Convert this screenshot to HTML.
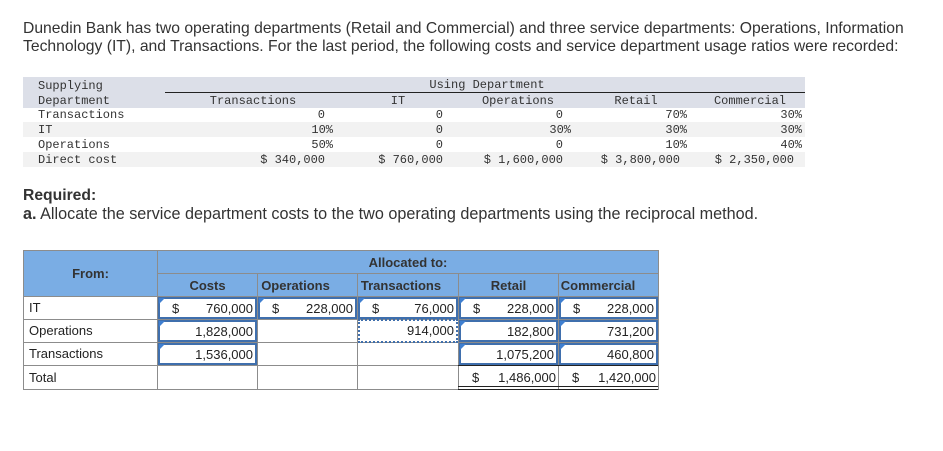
<!DOCTYPE html>
<html><head><meta charset="utf-8"><style>
body{margin:0;width:943px;height:451px;background:#fff;position:relative;overflow:hidden;font-family:"Liberation Sans",sans-serif;color:#333}
.a{position:absolute;white-space:nowrap}
.m{font-family:"Liberation Mono",monospace;font-size:12px;color:#333;line-height:15px}
.r{text-align:right}
.c{text-align:center}
.p{font-size:15.7px;line-height:18px}
.cell{position:absolute;box-sizing:border-box;border:1px solid #8c8c8c;font-size:13px;color:#222}
.hd{background:#7aade4}
.in{position:absolute;box-sizing:border-box;border:2px solid #3f6fad;font-size:13px;color:#222;line-height:19px}
.in:before{content:"";position:absolute;left:-1px;top:-1px;border-left:6px solid #3f7fd0;border-bottom:6px solid transparent}
.t{font-size:13px;color:#222;line-height:19px}
</style></head><body>
<div class="a p" style="left:23px;top:20px">Dunedin Bank has two operating departments (Retail and Commercial) and three service departments: Operations, Information</div>
<div class="a p" style="left:23px;top:38px">Technology (IT), and Transactions. For the last period, the following costs and service department usage ratios were recorded:</div>

<div class="a" style="left:23px;top:77px;width:782px;height:31px;background:#dcdfe8"></div>
<div class="a" style="left:23px;top:122px;width:782px;height:15px;background:#f2f2f2"></div>
<div class="a" style="left:23px;top:152px;width:782px;height:15px;background:#f2f2f2"></div>
<div class="a" style="left:165px;top:92px;width:640px;height:1px;background:#222"></div>

<div class="a m" style="left:38px;top:79px">Supplying</div>
<div class="a m" style="left:38px;top:94px">Department</div>
<div class="a m" style="left:38px;top:108px">Transactions</div>
<div class="a m" style="left:38px;top:123px">IT</div>
<div class="a m" style="left:38px;top:138px">Operations</div>
<div class="a m" style="left:38px;top:153px">Direct cost</div>
<div class="a m c" style="left:387px;width:200px;top:78px">Using Department</div>
<div class="a m c" style="left:153px;width:200px;top:94px">Transactions</div>
<div class="a m c" style="left:298px;width:200px;top:94px">IT</div>
<div class="a m c" style="left:418px;width:200px;top:94px">Operations</div>
<div class="a m c" style="left:536px;width:200px;top:94px">Retail</div>
<div class="a m c" style="left:650px;width:200px;top:94px">Commercial</div>

<div class="a m r" style="right:618px;top:108px">0</div>
<div class="a m r" style="right:610px;top:123px">10%</div>
<div class="a m r" style="right:610px;top:138px">50%</div>
<div class="a m r" style="right:618px;top:153px">$ 340,000</div>
<div class="a m r" style="right:500px;top:108px">0</div>
<div class="a m r" style="right:500px;top:123px">0</div>
<div class="a m r" style="right:500px;top:138px">0</div>
<div class="a m r" style="right:500px;top:153px">$ 760,000</div>
<div class="a m r" style="right:380px;top:108px">0</div>
<div class="a m r" style="right:372px;top:123px">30%</div>
<div class="a m r" style="right:380px;top:138px">0</div>
<div class="a m r" style="right:380px;top:153px">$ 1,600,000</div>
<div class="a m r" style="right:256px;top:108px">70%</div>
<div class="a m r" style="right:256px;top:123px">30%</div>
<div class="a m r" style="right:256px;top:138px">10%</div>
<div class="a m r" style="right:263px;top:153px">$ 3,800,000</div>
<div class="a m r" style="right:141px;top:108px">30%</div>
<div class="a m r" style="right:141px;top:123px">30%</div>
<div class="a m r" style="right:141px;top:138px">40%</div>
<div class="a m r" style="right:149px;top:153px">$ 2,350,000</div>

<div class="a p" style="left:23px;top:187px;font-weight:bold">Required:</div>
<div class="a p" style="left:23px;top:205px;font-size:16.2px"><b>a.</b> Allocate the service department costs to the two operating departments using the reciprocal method.</div>

<div class="cell hd" style="left:23px;top:250px;width:135px;height:47px"></div>
<div class="a t c" style="left:23px;width:135px;top:264px;font-weight:bold;color:#333">From:</div>
<div class="cell hd" style="left:157px;top:250px;width:502px;height:24px"></div>
<div class="a t c" style="left:157px;width:502px;top:253px;font-weight:bold;color:#333">Allocated to:</div>
<div class="cell hd" style="left:157px;top:273px;width:101px;height:24px"></div>
<div class="cell hd" style="left:257px;top:273px;width:101px;height:24px"></div>
<div class="cell hd" style="left:357px;top:273px;width:102px;height:24px"></div>
<div class="cell hd" style="left:458px;top:273px;width:101px;height:24px"></div>
<div class="cell hd" style="left:558px;top:273px;width:101px;height:24px"></div>
<div class="a t c" style="left:157px;width:101px;top:276px;font-weight:bold;color:#333">Costs</div>
<div class="a t c" style="left:257px;width:77px;top:276px;font-weight:bold;color:#333">Operations</div>
<div class="a t c" style="left:357px;width:88px;top:276px;font-weight:bold;color:#333">Transactions</div>
<div class="a t c" style="left:458px;width:101px;top:276px;font-weight:bold;color:#333">Retail</div>
<div class="a t c" style="left:558px;width:80px;top:276px;font-weight:bold;color:#333">Commercial</div>

<div class="cell" style="left:23px;top:296px;width:135px;height:24px"></div>
<div class="cell" style="left:23px;top:319px;width:135px;height:24px"></div>
<div class="cell" style="left:23px;top:342px;width:135px;height:24px"></div>
<div class="cell" style="left:23px;top:365px;width:135px;height:25px"></div>
<div class="cell" style="left:157px;top:296px;width:502px;height:94px"></div>
<div class="a" style="left:257px;top:296px;width:1px;height:94px;background:#8c8c8c"></div>
<div class="a" style="left:357px;top:296px;width:1px;height:94px;background:#8c8c8c"></div>
<div class="a" style="left:458px;top:296px;width:1px;height:94px;background:#8c8c8c"></div>
<div class="a" style="left:558px;top:296px;width:1px;height:94px;background:#8c8c8c"></div>
<div class="a" style="left:157px;top:319px;width:502px;height:1px;background:#8c8c8c"></div>
<div class="a" style="left:157px;top:342px;width:502px;height:1px;background:#8c8c8c"></div>
<div class="a" style="left:157px;top:365px;width:502px;height:1px;background:#8c8c8c"></div>
<div class="a" style="left:458px;top:386px;width:200px;height:1px;background:#222"></div>
<div class="a" style="left:458px;top:389px;width:200px;height:1px;background:#222"></div>
<div class="a" style="left:458px;top:365px;width:200px;height:1px;background:#222"></div>

<div class="a t" style="left:29px;top:298px">IT</div>
<div class="a t" style="left:29px;top:321px">Operations</div>
<div class="a t" style="left:29px;top:344px">Transactions</div>
<div class="a t" style="left:29px;top:368px">Total</div>

<div class="in" style="left:158px;top:297px;width:99px;height:22px"><span class="a" style="left:12px;top:0">$</span><span class="a" style="right:2px;top:0">760,000</span></div>
<div class="in" style="left:158px;top:320px;width:99px;height:22px"><span class="a" style="right:2px;top:0">1,828,000</span></div>
<div class="in" style="left:158px;top:343px;width:99px;height:22px"><span class="a" style="right:2px;top:0">1,536,000</span></div>
<div class="in" style="left:258px;top:297px;width:99px;height:22px"><span class="a" style="left:12px;top:0">$</span><span class="a" style="right:2px;top:0">228,000</span></div>
<div class="in" style="left:358px;top:297px;width:100px;height:22px"><span class="a" style="left:12px;top:0">$</span><span class="a" style="right:2px;top:0">76,000</span></div>
<div class="a" style="left:358px;top:319px;width:96px;height:20px;border:2px dotted #3f6fad"><span class="a t" style="right:2px;top:0">914,000</span></div>
<div class="in" style="left:459px;top:297px;width:99px;height:22px"><span class="a" style="left:12px;top:0">$</span><span class="a" style="right:2px;top:0">228,000</span></div>
<div class="in" style="left:459px;top:320px;width:99px;height:22px"><span class="a" style="right:2px;top:0">182,800</span></div>
<div class="in" style="left:459px;top:343px;width:99px;height:22px"><span class="a" style="right:2px;top:0">1,075,200</span></div>
<div class="in" style="left:559px;top:297px;width:99px;height:22px"><span class="a" style="left:12px;top:0">$</span><span class="a" style="right:2px;top:0">228,000</span></div>
<div class="in" style="left:559px;top:320px;width:99px;height:22px"><span class="a" style="right:2px;top:0">731,200</span></div>
<div class="in" style="left:559px;top:343px;width:99px;height:22px"><span class="a" style="right:2px;top:0">460,800</span></div>
<div class="a t" style="left:472px;top:368px">$</div>
<div class="a t r" style="right:387px;top:368px">1,486,000</div>
<div class="a t" style="left:572px;top:368px">$</div>
<div class="a t r" style="right:287px;top:368px">1,420,000</div>
</body></html>
